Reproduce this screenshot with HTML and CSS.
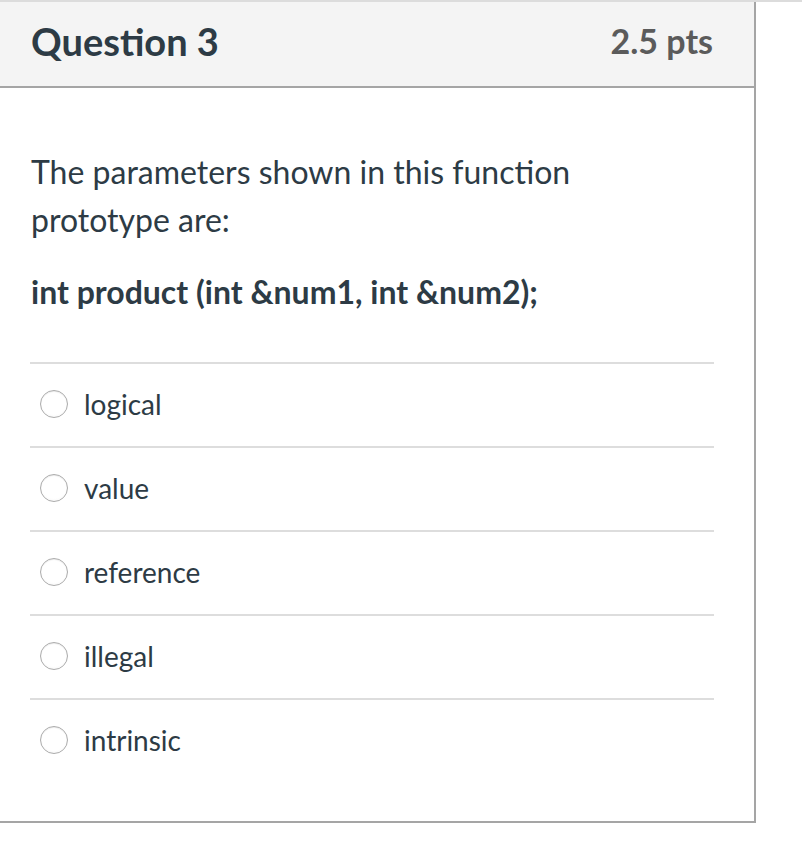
FILE: index.html
```html
<!DOCTYPE html>
<html>
<head>
<meta charset="utf-8">
<link rel="stylesheet" href="styles.css">
</head>
<body>
<div class="topline"></div>
<div class="card">
  <div class="header">
    <h2 class="title">Question 3</h2>
    <div class="pts">2.5 pts</div>
  </div>
  <div class="content">
    <p class="qtext">The parameters shown in this function prototype are:</p>
    <p class="qcode">int product (int &amp;num1, int &amp;num2);</p>
    <div class="answers">
      <label class="answer"><span class="radio"></span><span class="atext">logical</span></label>
      <label class="answer"><span class="radio"></span><span class="atext">value</span></label>
      <label class="answer"><span class="radio"></span><span class="atext">reference</span></label>
      <label class="answer"><span class="radio"></span><span class="atext">illegal</span></label>
      <label class="answer"><span class="radio"></span><span class="atext">intrinsic</span></label>
    </div>
  </div>
</div>
</body>
</html>
```
FILE: styles.css
```css
html, body {
  margin: 0;
  padding: 0;
  background: #fff;
}
body {
  font-family: Lato, "Noto Sans", sans-serif;
  color: #2d3b45;
}
.topline {
  height: 2px;
  background: #dcdcdc;
}
.card {
  width: 754px;
  border-right: 2px solid #a5a5a5;
  border-bottom: 2px solid #a5a5a5;
}
.header {
  box-sizing: border-box;
  height: 86px;
  background: #f4f4f4;
  border-bottom: 2px solid #a5a5a5;
  display: flex;
  align-items: center;
  justify-content: space-between;
  padding: 0 41px 6px 31px;
}
.title {
  margin: 0;
  font-size: 38px;
  font-weight: 700;
  color: #2d3b45;
  line-height: 1;
}
.pts {
  font-size: 34px;
  font-weight: 700;
  color: #5b5b5b;
  line-height: 1;
}
.content {
  padding: 60px 40px 39px 30px;
}
.qtext {
  margin: 0;
  font-size: 32px;
  line-height: 48px;
  width: 580px;
  padding-left: 1px;
}
.qcode {
  margin: 24px 0 0;
  font-size: 32px;
  line-height: 48px;
  font-weight: 700;
  padding-left: 1px;
}
.answers {
  margin-top: 46px;
  display: flex;
  flex-direction: column;
}
.answer {
  border-top: 2px solid #dddddd;
  height: 82px;
  display: flex;
  align-items: center;
  gap: 16px;
  padding-left: 10px;
}
.radio {
  width: 26px;
  height: 26px;
  border-radius: 50%;
  border: 1px solid #acacac;
  background: radial-gradient(circle at 50% 42%, #ffffff 62%, #eeeeee 100%);
  box-shadow: inset 0 1px 1px rgba(0,0,0,0.08);
  flex: none;
  margin-top: -2px;
}
.atext {
  font-size: 28px;
  color: #2d3b45;
  margin-top: -3px;
}
```
